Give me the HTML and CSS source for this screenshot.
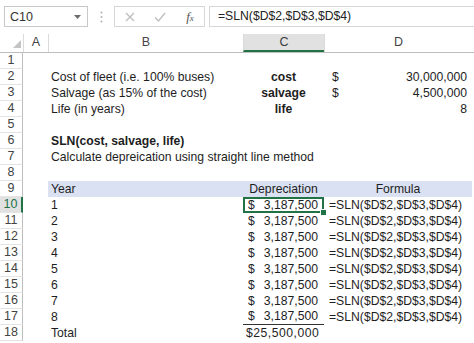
FILE: index.html
```html
<!DOCTYPE html>
<html lang="en">
<head>
    <meta charset="UTF-8">
    <title>SLN depreciation</title>
    <link rel="stylesheet" href="styles.css">
</head>
<body>
    <div class="formula-bar">
        <div class="name-box">
            <span>C10</span>
            <svg width="7" height="4" viewBox="0 0 7 4"><path d="M0 0 L7 0 L3.5 4 Z" fill="#6d6d6d"/></svg>
        </div>
        <div class="dots">
            <svg width="3" height="12" viewBox="0 0 3 12"><circle cx="1.5" cy="1.5" r="1" fill="#b0b0b0"/><circle cx="1.5" cy="6" r="1" fill="#b0b0b0"/><circle cx="1.5" cy="10.5" r="1" fill="#b0b0b0"/></svg>
        </div>
        <div class="fx-box">
            <svg width="10" height="10" viewBox="0 0 10 10"><path d="M1 1 L9 9 M9 1 L1 9" stroke="#bdbdbd" stroke-width="1.3"/></svg>
            <svg width="12" height="10" viewBox="0 0 12 10"><path d="M1 5.5 L4.5 9 L11 1" stroke="#bdbdbd" stroke-width="1.3" fill="none"/></svg>
            <span class="fx"><i>f</i><small>x</small></span>
        </div>
        <div class="formula-input">=SLN($D$2,$D$3,$D$4)</div>
    </div>

    <div class="sheet">
        <div class="row head">
            <div class="corner"><svg width="23" height="18" viewBox="0 0 23 18"><path d="M21 6 L21 14 L13 14 Z" fill="#c4c4c4"/></svg></div>
            <div class="col-head">A</div>
            <div class="col-head">B</div>
            <div class="col-head active">C</div>
            <div class="col-head">D</div>
        </div>

        <div class="row"><div class="rh">1</div><div></div><div></div><div></div><div></div></div>
        <div class="row"><div class="rh">2</div><div></div><div class="cell">Cost of fleet (i.e. 100% buses)</div><div class="cell bold center">cost</div><div class="cell acct"><span>$</span><span>30,000,000</span></div></div>
        <div class="row"><div class="rh">3</div><div></div><div class="cell">Salvage (as 15% of the cost)</div><div class="cell bold center">salvage</div><div class="cell acct"><span>$</span><span>4,500,000</span></div></div>
        <div class="row"><div class="rh">4</div><div></div><div class="cell">Life (in years)</div><div class="cell bold center">life</div><div class="cell right">8</div></div>
        <div class="row"><div class="rh">5</div><div></div><div></div><div></div><div></div></div>
        <div class="row"><div class="rh">6</div><div></div><div class="cell bold">SLN(cost, salvage, life)</div><div></div><div></div></div>
        <div class="row"><div class="rh">7</div><div></div><div class="cell">Calculate depreication using straight line method</div><div></div><div></div></div>
        <div class="row"><div class="rh">8</div><div></div><div></div><div></div><div></div></div>
        <div class="row"><div class="rh">9</div><div></div><div class="cell band">Year</div><div class="cell band center">Depreciation</div><div class="cell band center">Formula</div></div>
        <div class="row"><div class="rh active">10</div><div></div><div class="cell">1</div><div class="cell money selected"><span>$</span><span>3,187,500</span><i class="handle"></i></div><div class="cell formula">=SLN($D$2,$D$3,$D$4)</div></div>
        <div class="row"><div class="rh">11</div><div></div><div class="cell">2</div><div class="cell money"><span>$</span><span>3,187,500</span></div><div class="cell formula">=SLN($D$2,$D$3,$D$4)</div></div>
        <div class="row"><div class="rh">12</div><div></div><div class="cell">3</div><div class="cell money"><span>$</span><span>3,187,500</span></div><div class="cell formula">=SLN($D$2,$D$3,$D$4)</div></div>
        <div class="row"><div class="rh">13</div><div></div><div class="cell">4</div><div class="cell money"><span>$</span><span>3,187,500</span></div><div class="cell formula">=SLN($D$2,$D$3,$D$4)</div></div>
        <div class="row"><div class="rh">14</div><div></div><div class="cell">5</div><div class="cell money"><span>$</span><span>3,187,500</span></div><div class="cell formula">=SLN($D$2,$D$3,$D$4)</div></div>
        <div class="row"><div class="rh">15</div><div></div><div class="cell">6</div><div class="cell money"><span>$</span><span>3,187,500</span></div><div class="cell formula">=SLN($D$2,$D$3,$D$4)</div></div>
        <div class="row"><div class="rh">16</div><div></div><div class="cell">7</div><div class="cell money"><span>$</span><span>3,187,500</span></div><div class="cell formula">=SLN($D$2,$D$3,$D$4)</div></div>
        <div class="row"><div class="rh">17</div><div></div><div class="cell">8</div><div class="cell money underlined"><span>$</span><span>3,187,500</span></div><div class="cell formula">=SLN($D$2,$D$3,$D$4)</div></div>
        <div class="row"><div class="rh">18</div><div></div><div class="cell">Total</div><div class="cell money total"><span>$</span><span>25,500,000</span></div><div></div></div>
    </div>
</body>
</html>
```

FILE: styles.css
```css
body {
    margin: 0;
    background: #fff;
    font-family: "Liberation Sans", Arial, sans-serif;
    font-size: 12.2px;
    color: #1e1e1e;
    overflow: hidden;
}

/* formula bar */
.formula-bar {
    display: flex;
    align-items: flex-start;
    height: 34px;
    padding: 6px 0 0 4px;
    box-sizing: border-box;
}
.name-box {
    width: 84px;
    height: 21px;
    box-sizing: border-box;
    border: 1px solid #c9c9c9;
    display: flex;
    align-items: center;
    justify-content: space-between;
    padding: 0 6px 0 5px;
    color: #333;
    font-size: 12.5px;
}
.dots {
    width: 26px;
    height: 21px;
    display: flex;
    align-items: center;
    justify-content: center;
}
.fx-box {
    width: 91px;
    height: 21px;
    box-sizing: border-box;
    border: 1px solid #d6d6d6;
    display: grid;
    grid-template-columns: repeat(3, 30px);
    align-items: center;
    justify-items: center;
}
.fx {
    font-family: "Liberation Serif", "Times New Roman", serif;
    color: #555;
    font-size: 13px;
}
.fx small {
    font-size: 9px;
    font-style: italic;
}
.formula-input {
    flex: 1;
    margin-left: 4px;
    height: 21px;
    box-sizing: border-box;
    border: 1px solid #d6d6d6;
    border-right: none;
    padding-left: 8px;
    line-height: 19px;
    color: #222;
}

/* sheet */
.row {
    display: grid;
    grid-template-columns: 23px 25px 195px 81px 148px;
    height: 16px;
    line-height: 16px;
}
.row.head {
    height: 19px;
    line-height: 17px;
    border-bottom: 1px solid #bdbdbd;
    box-sizing: border-box;
}
.corner {
    height: 18px;
}
.col-head {
    text-align: center;
    color: #444;
    font-size: 12.5px;
    border-left: 1px solid #dadada;
}
.col-head.active {
    background: #e1e1e1;
    color: #3b3b3b;
    border-bottom: 2px solid #217346;
    height: 16px;
    line-height: 16px;
}
.rh {
    text-align: center;
    color: #444;
    font-size: 12.5px;
    border-right: 1px solid #bdbdbd;
    border-bottom: 1px solid #e4e4e4;
    box-sizing: border-box;
    line-height: 15px;
}
.rh.active {
    background: #e1e1e1;
    color: #217346;
    border-right: 2px solid #217346;
}
.cell {
    white-space: nowrap;
    padding: 0 3px;
    position: relative;
}
.bold {
    font-weight: bold;
}
.center {
    text-align: center;
}
.right {
    text-align: right;
    padding-right: 5px;
}
.acct {
    display: flex;
    justify-content: space-between;
    padding: 0 5px 0 8px;
}
.band {
    background: #d9e1f2;
}
.money {
    display: flex;
    justify-content: space-between;
    padding: 0 6px 0 5px;
}
.money.underlined {
    border-bottom: 1px solid #333;
    box-sizing: border-box;
    line-height: 15px;
}
.money.total {
    letter-spacing: 0.5px;
    padding-left: 3px;
}
.formula {
    padding-left: 5px;
}
.selected {
    box-shadow: inset 0 0 0 2px #217346;
}
.handle {
    position: absolute;
    right: -3px;
    bottom: -3px;
    width: 5px;
    height: 5px;
    background: #217346;
    border: 1px solid #fff;
}
```
